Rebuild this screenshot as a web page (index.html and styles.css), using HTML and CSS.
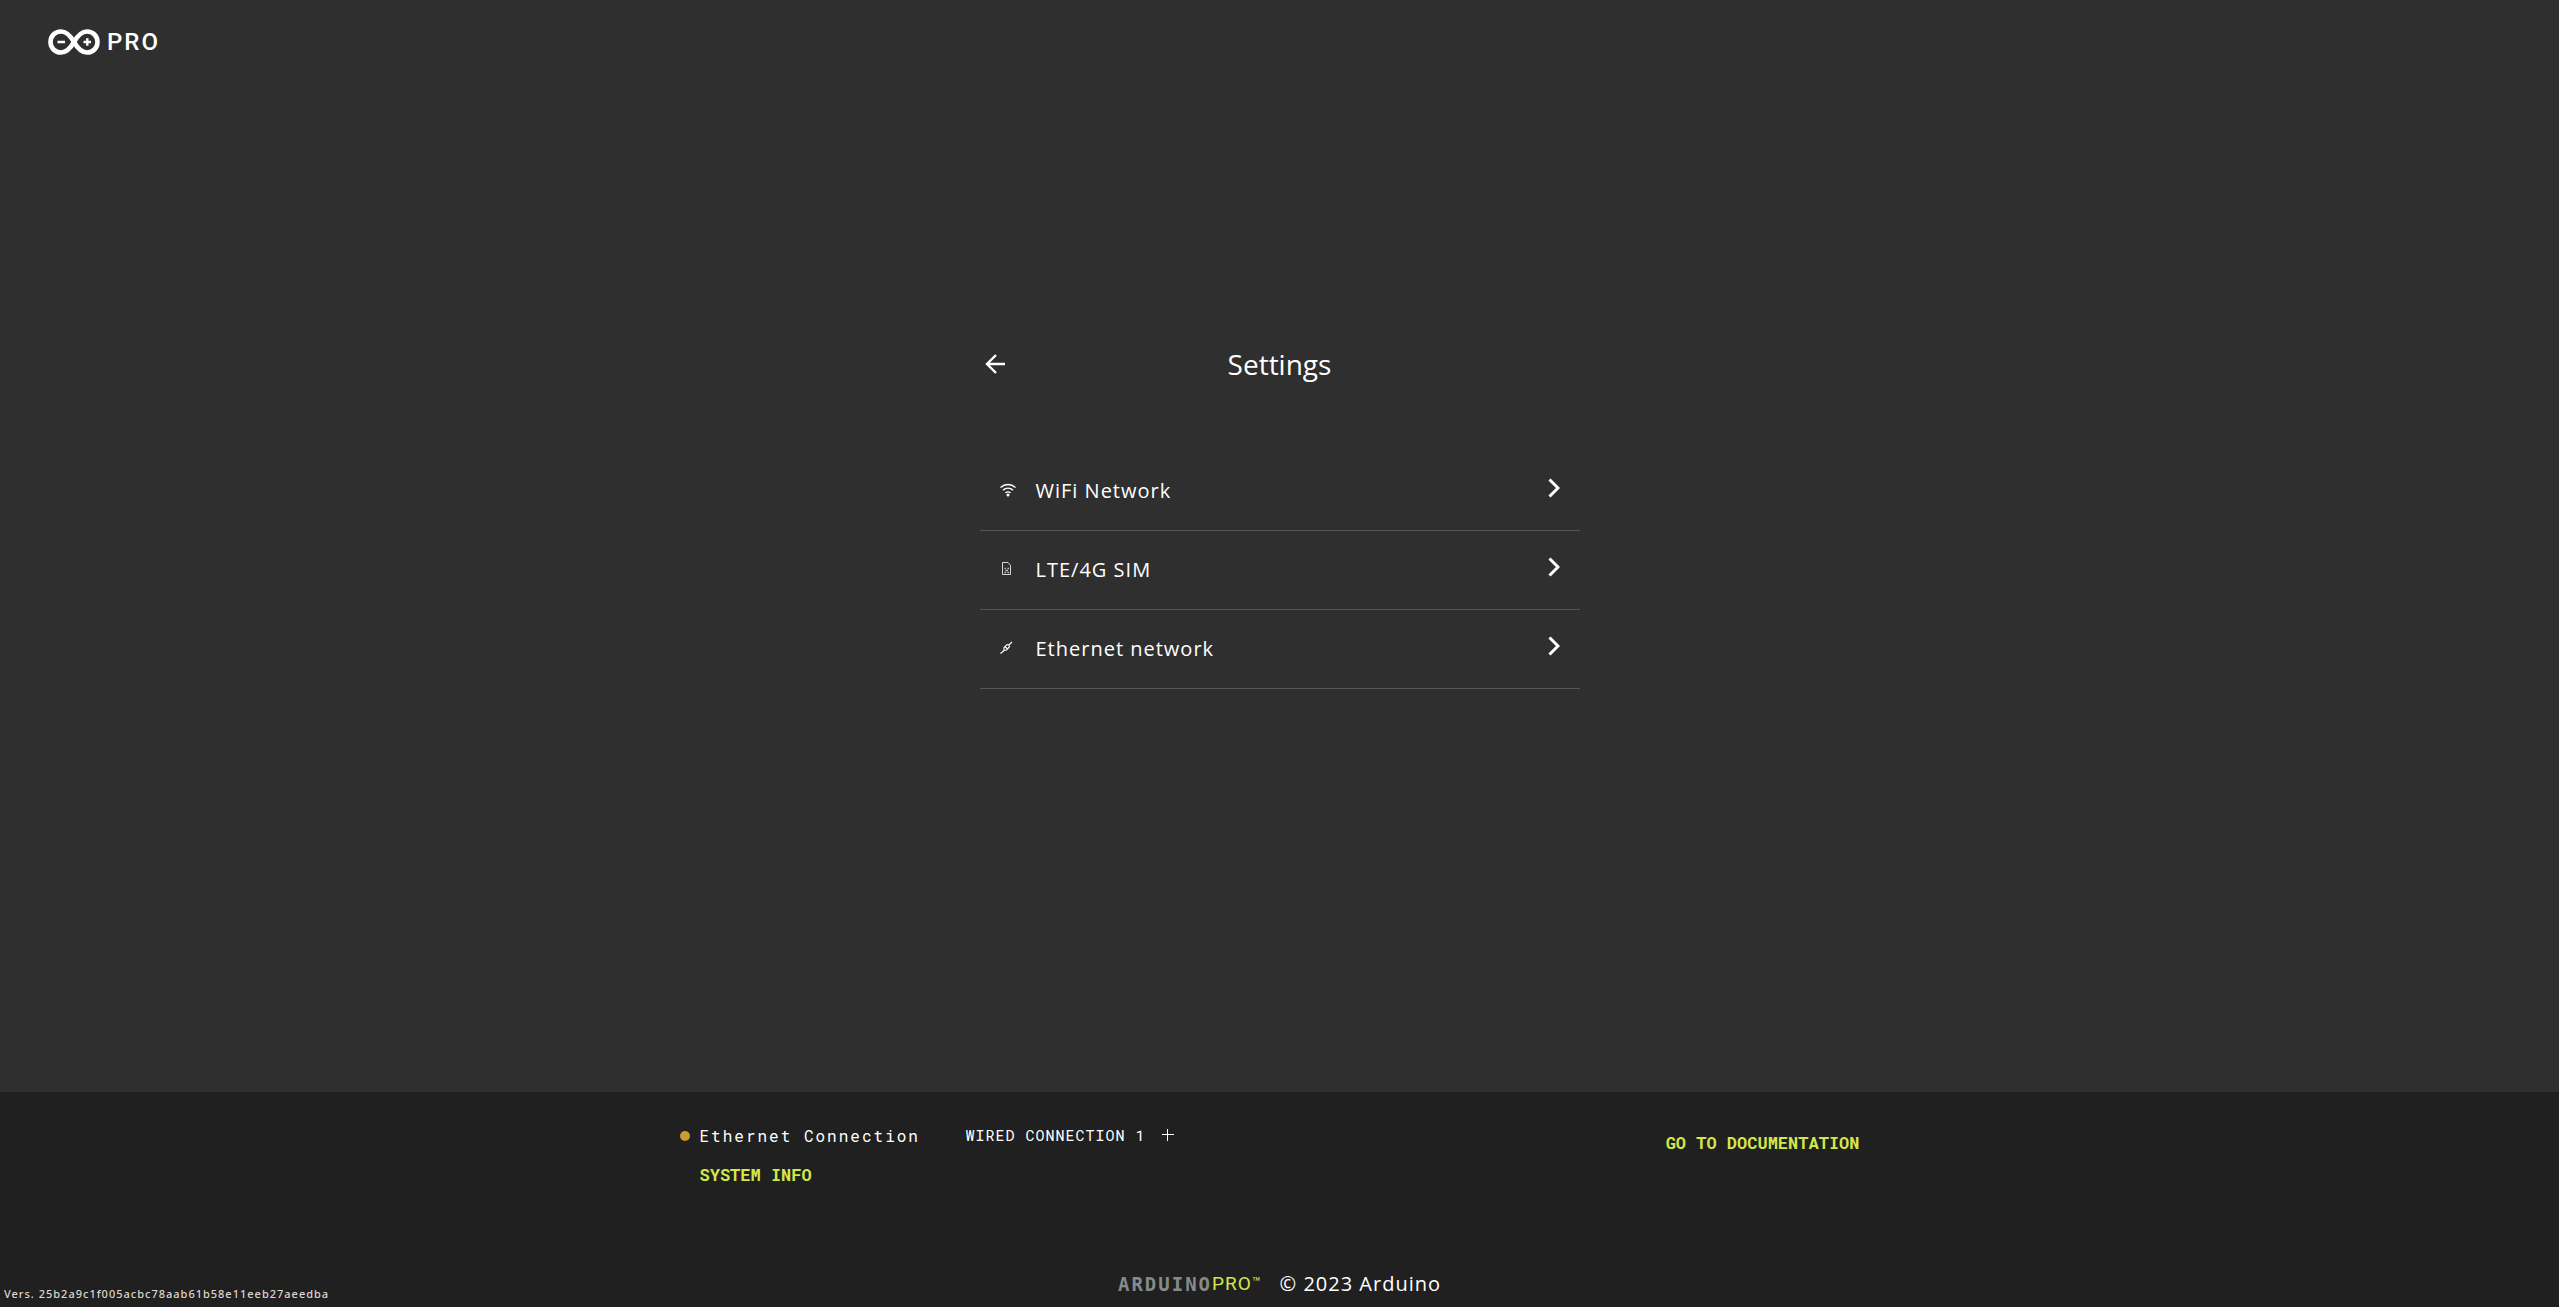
FILE: index.html
```html
<!DOCTYPE html>
<html lang="en">

<head>
    <meta charset="UTF-8">
    <meta name="viewport" content="width=device-width, initial-scale=1.0">
    <title>Arduino Pro - Settings</title>
    <link rel="stylesheet" href="styles.css">
</head>

<body>

    <header class="header">
        <a class="logo" href="#" aria-label="Arduino Pro">
            <svg width="52" height="26" viewBox="0 0 52 26" fill="none" stroke="currentColor">
                <path stroke-width="4.600" d="M26 13C22 6 18 2.500 13 2.500C7 2.500 2.500 7 2.500 13S7 23.500 13 23.500C18 23.500 22 20 26 13C30 6 34 2.500 39 2.500C45 2.500 49.500 7 49.500 13S45 23.500 39 23.500C34 23.500 30 20 26 13Z" />
                <path stroke-width="2.400" d="M9.500 13H17M35.500 13H43M39.300 9.200V16.800" />
            </svg>
            <span>PRO</span>
        </a>
    </header>

    <main class="main">
        <section class="settings">
            <div class="title">
                <button class="back" type="button" aria-label="Back">
                    <svg width="20" height="20" viewBox="0 0 20 20" fill="none" stroke="currentColor" stroke-width="2.400">
                        <path d="M20 10H2M11 1L2 10L11 19" />
                    </svg>
                </button>
                <h1>Settings</h1>
            </div>
            <ul class="list">
                <li>
                    <a href="#">
                        <svg class="icon" width="18" height="14" viewBox="0 0 18 14" fill="none" stroke="currentColor">
                            <path stroke-width="1.400" d="M0.500 4.500C5 0.500 11 0.500 15.500 4.500M3 7.300C6 4.500 10 4.500 13 7.300M5.500 10C7 8.500 9 8.500 10.500 10" />
                            <circle cx="8" cy="12" r="1.500" fill="currentColor" stroke="none" />
                        </svg>
                        <span>WiFi Network</span>
                        <svg class="arrow" width="12" height="20" viewBox="0 0 12 20"><path d="M1.500 1.500L10 10L1.500 18.500" /></svg>
                    </a>
                </li>
                <li>
                    <a href="#">
                        <svg class="icon" width="18" height="14" viewBox="0 0 18 14" fill="none" stroke="currentColor">
                            <path stroke-width="1" opacity="0.8" d="M2.500 0.500H8L10.500 3.500V12.500H2.500Z" />
                            <path stroke-width="1.400" opacity="0.7" d="M4.500 6.500H6M7.500 6.500H9M5.500 8.500H8M4.500 10.500H6M7.500 10.500H9" />
                        </svg>
                        <span>LTE/4G SIM</span>
                        <svg class="arrow" width="12" height="20" viewBox="0 0 12 20"><path d="M1.500 1.500L10 10L1.500 18.500" /></svg>
                    </a>
                </li>
                <li>
                    <a href="#">
                        <svg class="icon" width="18" height="14" viewBox="0 0 18 14" fill="none" stroke="currentColor">
                            <path stroke-width="1.100" d="M0.500 12.500L4 9.500M9 4L12 1M4 9.500L4 6.500L7 3.500L9 4L9.300 6L6.500 9L4 9.500M5 5.500L7.500 8" />
                        </svg>
                        <span>Ethernet network</span>
                        <svg class="arrow" width="12" height="20" viewBox="0 0 12 20"><path d="M1.500 1.500L10 10L1.500 18.500" /></svg>
                    </a>
                </li>
            </ul>
        </section>
    </main>

    <footer class="footer">
        <div class="status">
            <div class="connection">
                <span class="dot"></span>
                <span class="type">Ethernet Connection</span>
                <span class="network">WIRED CONNECTION 1</span>
                <button class="more" type="button" aria-label="Show details">
                    <svg width="12" height="12" viewBox="0 0 12 12" stroke="currentColor"><path d="M0 5.500H12M5.500 0V12" /></svg>
                </button>
                <a class="link info" href="#">SYSTEM INFO</a>
            </div>
            <a class="link docs" href="#">GO TO DOCUMENTATION</a>
        </div>
        <div class="copyright">
            <span class="brand"><b>ARDUINO</b><span>PRO</span><sup>™</sup></span>
            <span>© 2023 Arduino</span>
        </div>
        <small class="version">Vers. 25b2a9c1f005acbc78aab61b58e11eeb27aeedba</small>
    </footer>

</body>

</html>
```
FILE: styles.css
```css
* {
    margin: 0;
    padding: 0;
    box-sizing: border-box;
}

body {
    display: flex;
    flex-direction: column;
    min-height: 100vh;
    background-color: #2f2f2f;
    color: #fff;
    font-family: "Open Sans", sans-serif;
}

a {
    color: inherit;
    text-decoration: none;
}

button {
    display: flex;
    border: none;
    background: none;
    color: inherit;
    cursor: pointer;
}

svg {
    display: block;
    flex: none;
}

.header {
    display: flex;
    height: 84px;
    padding: 28px 48px;
}

.logo {
    display: flex;
    align-items: center;
    gap: 7px;
    height: 28px;
    font: 500 24px/28px Roboto, sans-serif;
    letter-spacing: 2px;
}

.main {
    display: flex;
    flex: 1;
    align-items: center;
    justify-content: center;
}

.settings {
    width: 600px;
    min-height: 496px;
}

.title {
    display: grid;
    grid-template-columns: 40px 1fr 40px;
    align-items: center;
    height: 48px;
    margin-bottom: 64px;
}

.title h1 {
    font-size: 28px;
    font-weight: 400;
    text-align: center;
}

.back {
    padding: 6px 5px;
}

.list {
    list-style: none;
}

.list li {
    border-bottom: 1px solid #5b534e;
}

.list a {
    display: flex;
    align-items: center;
    height: 78px;
    padding: 0 20px 2px;
    font-size: 20px;
    letter-spacing: 1px;
}

.icon {
    margin-right: 18px;
}

.arrow {
    margin-left: auto;
    margin-bottom: 4px;
    fill: none;
    stroke: currentColor;
    stroke-width: 3px;
}

.footer {
    position: relative;
    display: flex;
    flex-direction: column;
    align-items: center;
    justify-content: space-between;
    min-height: 215px;
    padding: 31px 0 8px;
    background-color: #202020;
}

.status {
    display: flex;
    justify-content: space-between;
    width: 100%;
    max-width: 1200px;
    padding-right: 20px;
    font-family: "Roboto Mono", "DejaVu Sans Mono", monospace;
}

.connection {
    display: grid;
    grid-template-columns: 20px 266px auto auto;
    align-items: center;
    row-gap: 14px;
    line-height: 25px;
}

.dot {
    width: 10px;
    height: 10px;
    border-radius: 50%;
    background-color: #cb9a35;
}

.type {
    font-size: 16px;
    letter-spacing: 2px;
}

.network {
    font-size: 15px;
    letter-spacing: 1px;
}

.more {
    padding: 0 16px 2px;
}

.link {
    color: #d5e64a;
    font-size: 17px;
    font-weight: 700;
}

.info {
    grid-column: 2;
}

.docs {
    padding-top: 8px;
}

.copyright {
    display: flex;
    align-items: center;
    gap: 18px;
    font-size: 20px;
    line-height: 30px;
    letter-spacing: 1px;
}

.brand {
    display: flex;
    color: #d5e64a;
    font: 400 19px/30px Roboto, sans-serif;
    letter-spacing: 1px;
}

.brand b {
    color: #868b8a;
    font-family: "DejaVu Sans Mono", monospace;
    font-weight: 700;
    letter-spacing: 2px;
}

.brand sup {
    font-size: 14px;
    line-height: 26px;
}

.version {
    position: absolute;
    left: 4px;
    bottom: 6px;
    color: #ddd5cc;
    font-family: "Noto Sans", "Open Sans", sans-serif;
    font-size: 11px;
    font-weight: 500;
    letter-spacing: 1px;
}
```
